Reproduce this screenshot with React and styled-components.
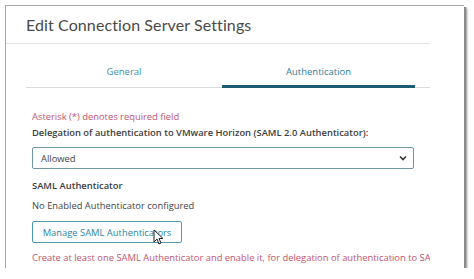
import React from "react";
import styled, { createGlobalStyle } from "styled-components";

const Global = createGlobalStyle`
  html, body {
    margin: 0;
    padding: 0;
    background: #ffffff;
    overflow: hidden;
  }
`;

const Frame = styled.div`
  position: relative;
  margin: 5px 0 0 5px;
  width: 458px;
  height: 262px;
  border-top: 1px solid #a8a8a8;
  border-left: 1px solid #a8a8a8;
  background: #fff;
  box-shadow: 2px 2px 0 #8a8a8a, 3px 3px 2px rgba(0, 0, 0, 0.45);
  overflow: hidden;
  font-family: "Open Sans", "Noto Sans", sans-serif;
`;

const Dialog = styled.div`
  width: 424px;
  overflow: hidden;
  white-space: nowrap;
`;

const Header = styled.div`
  height: 37px;
  display: flex;
  align-items: center;
  padding-left: 20px;
  border-bottom: 1px solid #e2e2e2;
`;

const Title = styled.h1`
  margin: 0;
  font-family: "Lato", "Open Sans", sans-serif;
  font-weight: 400;
  font-size: 16px;
  color: #4a4a4a;
  letter-spacing: 0.1px;
`;

const TabBar = styled.div`
  display: flex;
  margin-left: 20px;
  border-bottom: 1px solid #dcdcdc;
`;

const Tab = styled.div`
  flex: 0 0 ${(p) => (p.$active ? 193 : 196)}px;
  height: 44px;
  display: flex;
  align-items: flex-end;
  justify-content: center;
  padding-bottom: 7px;
  box-sizing: border-box;
  font-size: 9.5px;
  color: ${(p) => (p.$active ? "#2c7f9c" : "#3b8fac")};
  border-bottom: 3px solid ${(p) => (p.$active ? "#1d5d74" : "transparent")};
  margin-bottom: -1px;
`;

const Body = styled.div`
  padding: 22px 0 0 26px;
  display: flex;
  flex-direction: column;
  align-items: flex-start;
`;

const Note = styled.div`
  font-size: 9.4px;
  line-height: 14px;
  color: ${(p) => p.$color || "#c35570"};
  margin-bottom: ${(p) => p.$gap || 0}px;
`;

const Label = styled.div`
  font-size: 9.4px;
  line-height: 14px;
  font-weight: 600;
  color: #3d3d3d;
  margin-bottom: ${(p) => p.$gap || 0}px;
`;

const Select = styled.div`
  width: 382px;
  height: 22px;
  box-sizing: border-box;
  border: 1px solid #6d97a3;
  border-radius: 2px;
  display: flex;
  align-items: center;
  justify-content: space-between;
  padding: 0 6px 0 8px;
  font-size: 9.4px;
  color: #444;
  margin-bottom: 10px;
`;

const Button = styled.div`
  position: relative;
  width: 150px;
  height: 22px;
  box-sizing: border-box;
  border: 1px solid #4c9aab;
  border-radius: 2px;
  display: flex;
  align-items: center;
  justify-content: center;
  font-size: 9.4px;
  color: #2a86a4;
  margin-bottom: 8px;
`;

const Cursor = styled.svg`
  position: absolute;
  left: 120px;
  top: 7px;
`;

function Chevron() {
  return (
    <svg width="8" height="6" viewBox="0 0 8 6">
      <path d="M1 1.5 L4 4.5 L7 1.5" fill="none" stroke="#333" strokeWidth="1.6" />
    </svg>
  );
}

export default function App() {
  return (
    <>
      <Global />
      <Frame>
        <Dialog>
          <Header>
            <Title>Edit Connection Server Settings</Title>
          </Header>
          <TabBar>
            <Tab>General</Tab>
            <Tab $active>Authentication</Tab>
          </TabBar>
          <Body>
            <Note $gap={2}>Asterisk (*) denotes required field</Note>
            <Label $gap={7}>Delegation of authentication to VMware Horizon (SAML 2.0 Authenticator):</Label>
            <Select>
              <span>Allowed</span>
              <Chevron />
            </Select>
            <Label $gap={6}>SAML Authenticator</Label>
            <Note $color="#444" $gap={8}>No Enabled Authenticator configured</Note>
            <Button>
              Manage SAML Authenticators
              <Cursor width="11" height="16" viewBox="0 0 11 16">
                <path d="M1 1 L1 13 L4 10 L6 15 L8 14 L6 9.5 L10 9.5 Z" fill="#fff" stroke="#222" strokeWidth="1" strokeLinejoin="round" />
              </Cursor>
            </Button>
            <Note>Create at least one SAML Authenticator and enable it, for delegation of authentication to SAML</Note>
          </Body>
        </Dialog>
      </Frame>
    </>
  );
}
